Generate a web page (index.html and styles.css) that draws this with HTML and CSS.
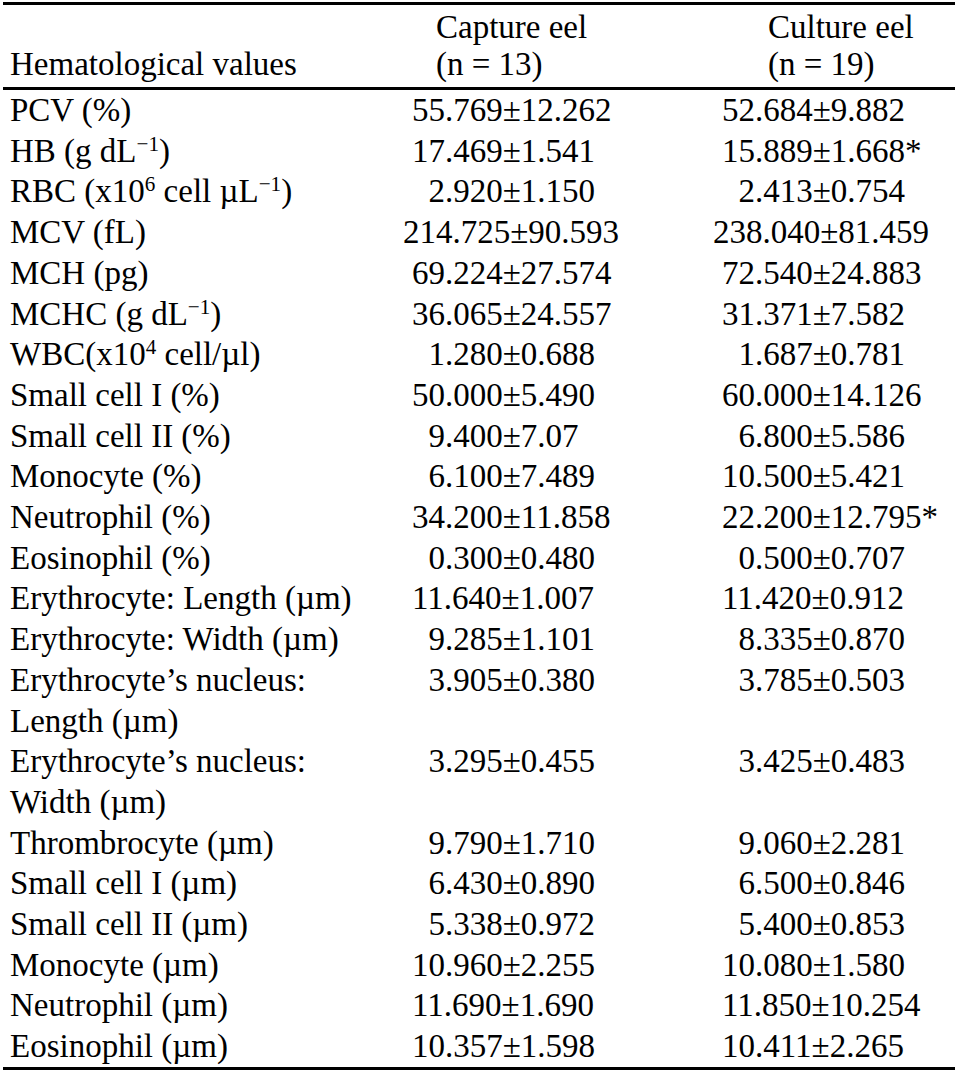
FILE: index.html
```html
<!DOCTYPE html>
<html lang="en">
<head>
  <meta charset="UTF-8">
  <meta name="viewport" content="width=device-width, initial-scale=1.0">
  <title>Hematological values</title>

  <link rel="stylesheet" href="styles.css">
</head>
<body>
  <table class="hema">
    <colgroup>
      <col class="c-name">
      <col class="c-cap">
      <col class="c-cul">
    </colgroup>
    <thead>
      <tr>
        <th class="h-name">Hematological values</th>
        <th class="h-cap">Capture eel<br>(n = 13)</th>
        <th class="h-cul">Culture eel<br>(n = 19)</th>
      </tr>
    </thead>
    <tbody>
      <tr><td>PCV (%)</td><td>55.769±12.262</td><td>52.684±9.882</td></tr>
      <tr><td>HB (g dL<sup>−1</sup>)</td><td>17.469±1.541</td><td>15.889±1.668*</td></tr>
      <tr><td>RBC (x10<sup>6</sup> cell µL<sup>−1</sup>)</td><td class="i1">2.920±1.150</td><td class="i1">2.413±0.754</td></tr>
      <tr><td>MCV (fL)</td><td class="o1">214.725±90.593</td><td class="o1">238.040±81.459</td></tr>
      <tr><td>MCH (pg)</td><td>69.224±27.574</td><td>72.540±24.883</td></tr>
      <tr><td>MCHC (g dL<sup>−1</sup>)</td><td>36.065±24.557</td><td>31.371±7.582</td></tr>
      <tr><td>WBC(x10<sup>4</sup> cell/µl)</td><td class="i1">1.280±0.688</td><td class="i1">1.687±0.781</td></tr>
      <tr><td>Small cell I (%)</td><td>50.000±5.490</td><td>60.000±14.126</td></tr>
      <tr><td>Small cell II (%)</td><td class="i1">9.400±7.07</td><td class="i1">6.800±5.586</td></tr>
      <tr><td>Monocyte (%)</td><td class="i1">6.100±7.489</td><td>10.500±5.421</td></tr>
      <tr><td>Neutrophil (%)</td><td>34.200±11.858</td><td>22.200±12.795*</td></tr>
      <tr><td>Eosinophil (%)</td><td class="i1">0.300±0.480</td><td class="i1">0.500±0.707</td></tr>
      <tr><td>Erythrocyte: Length (µm)</td><td>11.640±1.007</td><td>11.420±0.912</td></tr>
      <tr><td>Erythrocyte: Width (µm)</td><td class="i1">9.285±1.101</td><td class="i1">8.335±0.870</td></tr>
      <tr><td>Erythrocyte’s nucleus:<br>Length (µm)</td><td class="i1">3.905±0.380</td><td class="i1">3.785±0.503</td></tr>
      <tr><td>Erythrocyte’s nucleus:<br>Width (µm)</td><td class="i1">3.295±0.455</td><td class="i1">3.425±0.483</td></tr>
      <tr><td>Thrombrocyte (µm)</td><td class="i1">9.790±1.710</td><td class="i1">9.060±2.281</td></tr>
      <tr><td>Small cell I (µm)</td><td class="i1">6.430±0.890</td><td class="i1">6.500±0.846</td></tr>
      <tr><td>Small cell II (µm)</td><td class="i1">5.338±0.972</td><td class="i1">5.400±0.853</td></tr>
      <tr><td>Monocyte (µm)</td><td>10.960±2.255</td><td>10.080±1.580</td></tr>
      <tr><td>Neutrophil (µm)</td><td>11.690±1.690</td><td>11.850±10.254</td></tr>
      <tr><td>Eosinophil (µm)</td><td>10.357±1.598</td><td>10.411±2.265</td></tr>
    </tbody>
  </table>
</body>
</html>
```

FILE: styles.css
```css
body {
  margin: 0;
  background: #fff;
  color: #000;
  font-family: "Liberation Serif", "Times New Roman", serif;
  font-size: 33px;
}

.hema {
  width: 952px;
  margin: 2px 0 0 3px;
  border-collapse: separate;
  border-spacing: 0;
  table-layout: fixed;
}
.c-name { width: 400px; }
.c-cap { width: 310px; }
.c-cul { width: 242px; }

/* header */
.hema th {
  font-weight: normal;
  text-align: left;
  vertical-align: bottom;
  line-height: 37px;
  padding: 4px 0 4px 0;
  border-top: 3px solid #000;
  border-bottom: 3px solid #000;
}
.hema th.h-name { padding-left: 7px; }
.hema th.h-cap { padding-left: 33px; }
.hema th.h-cul { padding-left: 55px; }

/* rows */
.hema td {
  padding: 0 0 0 9px;
  line-height: 40.7px;
  vertical-align: top;
  white-space: nowrap;
}
.hema td:first-child { padding-left: 7px; }
.hema tbody tr:last-child td { border-bottom: 3px solid #000; }

/* decimal tab: one digit in or out */
.hema td.i1 { padding-left: calc(9px + 1ch); }
.hema td.o1 { padding-left: calc(9px - 1ch); }

sup {
  font-size: 0.64em;
  line-height: 0;
  vertical-align: 0.5em;
}
```
